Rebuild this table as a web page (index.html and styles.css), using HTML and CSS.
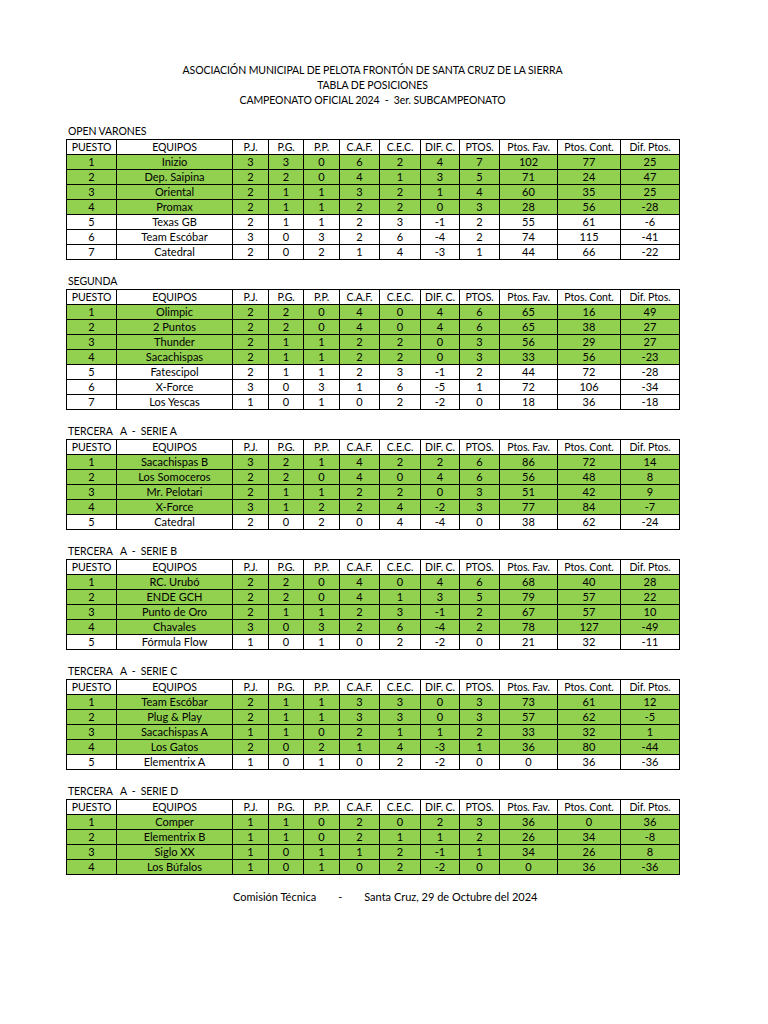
FILE: index.html
```html
<!DOCTYPE html>
<html lang="es">
<head>
<meta charset="utf-8">
<title>Tabla de Posiciones</title>
<link rel="stylesheet" href="styles.css">
</head>
<body>
<div class="page">
  <div class="title">
    <div class="line">ASOCIACIÓN MUNICIPAL DE PELOTA FRONTÓN DE SANTA CRUZ DE LA SIERRA</div>
    <div class="line">TABLA DE POSICIONES</div>
    <div class="line">CAMPEONATO OFICIAL 2024  -  3er. SUBCAMPEONATO</div>
  </div>

  <section class="block">
    <div class="label">OPEN VARONES</div>
    <table class="grid">
      <colgroup><col class="c1"><col class="c2"><col class="c3"><col class="c4"><col class="c5"><col class="c6"><col class="c7"><col class="c8"><col class="c9"><col class="c10"><col class="c11"><col class="c12"></colgroup>
      <thead><tr><th>PUESTO</th><th>EQUIPOS</th><th>P.J.</th><th>P.G.</th><th>P.P.</th><th>C.A.F.</th><th>C.E.C.</th><th>DIF. C.</th><th>PTOS.</th><th>Ptos. Fav.</th><th>Ptos. Cont.</th><th>Dif. Ptos.</th></tr></thead>
      <tbody>
        <tr class="q"><td>1</td><td>Inizio</td><td>3</td><td>3</td><td>0</td><td>6</td><td>2</td><td>4</td><td>7</td><td>102</td><td>77</td><td>25</td></tr>
        <tr class="q"><td>2</td><td>Dep. Saipina</td><td>2</td><td>2</td><td>0</td><td>4</td><td>1</td><td>3</td><td>5</td><td>71</td><td>24</td><td>47</td></tr>
        <tr class="q"><td>3</td><td>Oriental</td><td>2</td><td>1</td><td>1</td><td>3</td><td>2</td><td>1</td><td>4</td><td>60</td><td>35</td><td>25</td></tr>
        <tr class="q"><td>4</td><td>Promax</td><td>2</td><td>1</td><td>1</td><td>2</td><td>2</td><td>0</td><td>3</td><td>28</td><td>56</td><td>-28</td></tr>
        <tr><td>5</td><td>Texas GB</td><td>2</td><td>1</td><td>1</td><td>2</td><td>3</td><td>-1</td><td>2</td><td>55</td><td>61</td><td>-6</td></tr>
        <tr><td>6</td><td>Team Escóbar</td><td>3</td><td>0</td><td>3</td><td>2</td><td>6</td><td>-4</td><td>2</td><td>74</td><td>115</td><td>-41</td></tr>
        <tr><td>7</td><td>Catedral</td><td>2</td><td>0</td><td>2</td><td>1</td><td>4</td><td>-3</td><td>1</td><td>44</td><td>66</td><td>-22</td></tr>
      </tbody>
    </table>
  </section>

  <section class="block">
    <div class="label">SEGUNDA</div>
    <table class="grid">
      <colgroup><col class="c1"><col class="c2"><col class="c3"><col class="c4"><col class="c5"><col class="c6"><col class="c7"><col class="c8"><col class="c9"><col class="c10"><col class="c11"><col class="c12"></colgroup>
      <thead><tr><th>PUESTO</th><th>EQUIPOS</th><th>P.J.</th><th>P.G.</th><th>P.P.</th><th>C.A.F.</th><th>C.E.C.</th><th>DIF. C.</th><th>PTOS.</th><th>Ptos. Fav.</th><th>Ptos. Cont.</th><th>Dif. Ptos.</th></tr></thead>
      <tbody>
        <tr class="q"><td>1</td><td>Olimpic</td><td>2</td><td>2</td><td>0</td><td>4</td><td>0</td><td>4</td><td>6</td><td>65</td><td>16</td><td>49</td></tr>
        <tr class="q"><td>2</td><td>2 Puntos</td><td>2</td><td>2</td><td>0</td><td>4</td><td>0</td><td>4</td><td>6</td><td>65</td><td>38</td><td>27</td></tr>
        <tr class="q"><td>3</td><td>Thunder</td><td>2</td><td>1</td><td>1</td><td>2</td><td>2</td><td>0</td><td>3</td><td>56</td><td>29</td><td>27</td></tr>
        <tr class="q"><td>4</td><td>Sacachispas</td><td>2</td><td>1</td><td>1</td><td>2</td><td>2</td><td>0</td><td>3</td><td>33</td><td>56</td><td>-23</td></tr>
        <tr><td>5</td><td>Fatescipol</td><td>2</td><td>1</td><td>1</td><td>2</td><td>3</td><td>-1</td><td>2</td><td>44</td><td>72</td><td>-28</td></tr>
        <tr><td>6</td><td>X-Force</td><td>3</td><td>0</td><td>3</td><td>1</td><td>6</td><td>-5</td><td>1</td><td>72</td><td>106</td><td>-34</td></tr>
        <tr><td>7</td><td>Los Yescas</td><td>1</td><td>0</td><td>1</td><td>0</td><td>2</td><td>-2</td><td>0</td><td>18</td><td>36</td><td>-18</td></tr>
      </tbody>
    </table>
  </section>

  <section class="block">
    <div class="label">TERCERA   A  -  SERIE A</div>
    <table class="grid">
      <colgroup><col class="c1"><col class="c2"><col class="c3"><col class="c4"><col class="c5"><col class="c6"><col class="c7"><col class="c8"><col class="c9"><col class="c10"><col class="c11"><col class="c12"></colgroup>
      <thead><tr><th>PUESTO</th><th>EQUIPOS</th><th>P.J.</th><th>P.G.</th><th>P.P.</th><th>C.A.F.</th><th>C.E.C.</th><th>DIF. C.</th><th>PTOS.</th><th>Ptos. Fav.</th><th>Ptos. Cont.</th><th>Dif. Ptos.</th></tr></thead>
      <tbody>
        <tr class="q"><td>1</td><td>Sacachispas B</td><td>3</td><td>2</td><td>1</td><td>4</td><td>2</td><td>2</td><td>6</td><td>86</td><td>72</td><td>14</td></tr>
        <tr class="q"><td>2</td><td>Los Somoceros</td><td>2</td><td>2</td><td>0</td><td>4</td><td>0</td><td>4</td><td>6</td><td>56</td><td>48</td><td>8</td></tr>
        <tr class="q"><td>3</td><td>Mr. Pelotari</td><td>2</td><td>1</td><td>1</td><td>2</td><td>2</td><td>0</td><td>3</td><td>51</td><td>42</td><td>9</td></tr>
        <tr class="q"><td>4</td><td>X-Force</td><td>3</td><td>1</td><td>2</td><td>2</td><td>4</td><td>-2</td><td>3</td><td>77</td><td>84</td><td>-7</td></tr>
        <tr><td>5</td><td>Catedral</td><td>2</td><td>0</td><td>2</td><td>0</td><td>4</td><td>-4</td><td>0</td><td>38</td><td>62</td><td>-24</td></tr>
      </tbody>
    </table>
  </section>

  <section class="block">
    <div class="label">TERCERA   A  -  SERIE B</div>
    <table class="grid">
      <colgroup><col class="c1"><col class="c2"><col class="c3"><col class="c4"><col class="c5"><col class="c6"><col class="c7"><col class="c8"><col class="c9"><col class="c10"><col class="c11"><col class="c12"></colgroup>
      <thead><tr><th>PUESTO</th><th>EQUIPOS</th><th>P.J.</th><th>P.G.</th><th>P.P.</th><th>C.A.F.</th><th>C.E.C.</th><th>DIF. C.</th><th>PTOS.</th><th>Ptos. Fav.</th><th>Ptos. Cont.</th><th>Dif. Ptos.</th></tr></thead>
      <tbody>
        <tr class="q"><td>1</td><td>RC. Urubó</td><td>2</td><td>2</td><td>0</td><td>4</td><td>0</td><td>4</td><td>6</td><td>68</td><td>40</td><td>28</td></tr>
        <tr class="q"><td>2</td><td>ENDE GCH</td><td>2</td><td>2</td><td>0</td><td>4</td><td>1</td><td>3</td><td>5</td><td>79</td><td>57</td><td>22</td></tr>
        <tr class="q"><td>3</td><td>Punto de Oro</td><td>2</td><td>1</td><td>1</td><td>2</td><td>3</td><td>-1</td><td>2</td><td>67</td><td>57</td><td>10</td></tr>
        <tr class="q"><td>4</td><td>Chavales</td><td>3</td><td>0</td><td>3</td><td>2</td><td>6</td><td>-4</td><td>2</td><td>78</td><td>127</td><td>-49</td></tr>
        <tr><td>5</td><td>Fórmula Flow</td><td>1</td><td>0</td><td>1</td><td>0</td><td>2</td><td>-2</td><td>0</td><td>21</td><td>32</td><td>-11</td></tr>
      </tbody>
    </table>
  </section>

  <section class="block">
    <div class="label">TERCERA   A  -  SERIE C</div>
    <table class="grid">
      <colgroup><col class="c1"><col class="c2"><col class="c3"><col class="c4"><col class="c5"><col class="c6"><col class="c7"><col class="c8"><col class="c9"><col class="c10"><col class="c11"><col class="c12"></colgroup>
      <thead><tr><th>PUESTO</th><th>EQUIPOS</th><th>P.J.</th><th>P.G.</th><th>P.P.</th><th>C.A.F.</th><th>C.E.C.</th><th>DIF. C.</th><th>PTOS.</th><th>Ptos. Fav.</th><th>Ptos. Cont.</th><th>Dif. Ptos.</th></tr></thead>
      <tbody>
        <tr class="q"><td>1</td><td>Team Escóbar</td><td>2</td><td>1</td><td>1</td><td>3</td><td>3</td><td>0</td><td>3</td><td>73</td><td>61</td><td>12</td></tr>
        <tr class="q"><td>2</td><td>Plug &amp; Play</td><td>2</td><td>1</td><td>1</td><td>3</td><td>3</td><td>0</td><td>3</td><td>57</td><td>62</td><td>-5</td></tr>
        <tr class="q"><td>3</td><td>Sacachispas A</td><td>1</td><td>1</td><td>0</td><td>2</td><td>1</td><td>1</td><td>2</td><td>33</td><td>32</td><td>1</td></tr>
        <tr class="q"><td>4</td><td>Los Gatos</td><td>2</td><td>0</td><td>2</td><td>1</td><td>4</td><td>-3</td><td>1</td><td>36</td><td>80</td><td>-44</td></tr>
        <tr><td>5</td><td>Elementrix A</td><td>1</td><td>0</td><td>1</td><td>0</td><td>2</td><td>-2</td><td>0</td><td>0</td><td>36</td><td>-36</td></tr>
      </tbody>
    </table>
  </section>

  <section class="block">
    <div class="label">TERCERA   A  -  SERIE D</div>
    <table class="grid">
      <colgroup><col class="c1"><col class="c2"><col class="c3"><col class="c4"><col class="c5"><col class="c6"><col class="c7"><col class="c8"><col class="c9"><col class="c10"><col class="c11"><col class="c12"></colgroup>
      <thead><tr><th>PUESTO</th><th>EQUIPOS</th><th>P.J.</th><th>P.G.</th><th>P.P.</th><th>C.A.F.</th><th>C.E.C.</th><th>DIF. C.</th><th>PTOS.</th><th>Ptos. Fav.</th><th>Ptos. Cont.</th><th>Dif. Ptos.</th></tr></thead>
      <tbody>
        <tr class="q"><td>1</td><td>Comper</td><td>1</td><td>1</td><td>0</td><td>2</td><td>0</td><td>2</td><td>3</td><td>36</td><td>0</td><td>36</td></tr>
        <tr class="q"><td>2</td><td>Elementrix B</td><td>1</td><td>1</td><td>0</td><td>2</td><td>1</td><td>1</td><td>2</td><td>26</td><td>34</td><td>-8</td></tr>
        <tr class="q"><td>3</td><td>Siglo XX</td><td>1</td><td>0</td><td>1</td><td>1</td><td>2</td><td>-1</td><td>1</td><td>34</td><td>26</td><td>8</td></tr>
        <tr class="q"><td>4</td><td>Los Búfalos</td><td>1</td><td>0</td><td>1</td><td>0</td><td>2</td><td>-2</td><td>0</td><td>0</td><td>36</td><td>-36</td></tr>
      </tbody>
    </table>
  </section>

  <div class="footer">
    <span>Comisión Técnica</span>
    <span>-</span>
    <span>Santa Cruz, 29 de Octubre del 2024</span>
  </div>
</div>
</body>
</html>
```

FILE: styles.css
```css
html, body {
  margin: 0;
  padding: 0;
  background: #ffffff;
}

body {
  font-family: "Lato", "Open Sans", "Liberation Sans", sans-serif;
  font-size: 11px;
  color: #000000;
}

.page {
  width: 613px;
  padding: 63px 0 0 66px;
}

.title {
  text-align: center;
  padding-bottom: 16px;
  font-size: 10.5px;
  letter-spacing: -0.1px;
}

.line {
  height: 15px;
  line-height: 15px;
  white-space: pre;
}

.block {
  margin-bottom: 14px;
}

.label {
  height: 15px;
  line-height: 15px;
  padding-left: 2px;
  white-space: pre;
  font-size: 10.5px;
  letter-spacing: -0.1px;
}

.grid {
  border-collapse: collapse;
  table-layout: fixed;
  width: 613px;
}

.grid th,
.grid td {
  border: 1px solid #000000;
  padding: 0;
  height: 14px;
  line-height: 14px;
  text-align: center;
  font-weight: normal;
  white-space: nowrap;
  overflow: hidden;
}

.grid th {
  font-size: 10.5px;
  letter-spacing: -0.1px;
}

.grid tr.q td {
  background: #92d050;
}

.c1 { width: 50px; }
.c2 { width: 116px; }
.c3 { width: 36px; }
.c4 { width: 35px; }
.c5 { width: 36px; }
.c6 { width: 40px; }
.c7 { width: 41px; }
.c8 { width: 39px; }
.c9 { width: 40px; }
.c10 { width: 58px; }
.c11 { width: 63px; }
.c12 { width: 59px; }

.footer {
  display: flex;
  gap: 22px;
  height: 15px;
  line-height: 15px;
  padding-left: 167px;
}
```
